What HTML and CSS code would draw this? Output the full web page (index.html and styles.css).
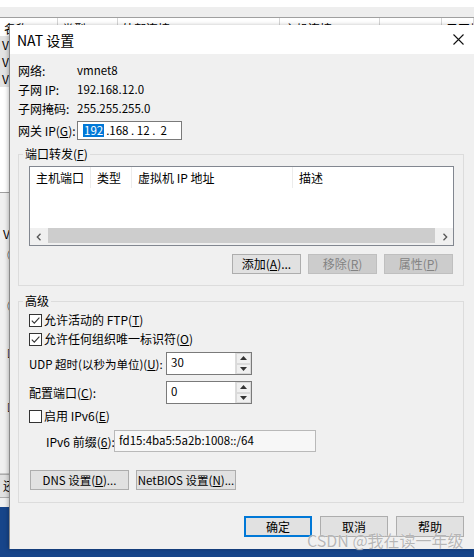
FILE: index.html
```html
<!DOCTYPE html>
<html lang="zh-CN">
<head>
<meta charset="utf-8">
<title>NAT 设置</title>
<link rel="stylesheet" href="styles.css">
</head>
<body>
<div class="desk">
  <div class="bgwin">
    <div class="bg-top"></div>
    <div class="bg-tool"></div>
    <div class="bg-thead">
      <span class="hc1">名称</span><span class="hc2">类型</span><span class="hc3">外部连接</span><span class="hc4">主机连接</span><span class="hc5">DHCP</span><span class="hc6">子网地址</span>
    </div>
    <div class="bg-rows">
      <div class="bg-row">VMnet0</div>
      <div class="bg-row">VMnet1</div>
      <div class="bg-row">VMnet8</div>
    </div>
    <div class="bg-white"></div>
    <div class="bg-info">
      <div class="bg-label">VMnet 信息</div>
      <div class="bg-radio first">○ 桥接模式</div>
      <div class="bg-radio second">○ NAT 模式</div>
      <div class="bg-chk first">☐ 将主机虚拟适配器连接到此网络</div>
      <div class="bg-chk second">☐ 使用本地 DHCP 服务</div>
    </div>
    <div class="bg-foot"><span class="bg-btn">还原默认设置</span></div>
  </div>

  <div class="dialog">
    <div class="titlebar">
      <span class="title">NAT 设置</span>
      <svg class="close" width="11" height="11" viewBox="0 0 11 11"><path d="M0.5 0.5 L10.5 10.5 M10.5 0.5 L0.5 10.5" stroke="#111" stroke-width="1.1" fill="none"/></svg>
    </div>
    <div class="body">
      <div class="info-row"><span class="lbl">网络:</span><span class="val">vmnet8</span></div>
      <div class="info-row"><span class="lbl">子网 IP:</span><span class="val">192.168.12.0</span></div>
      <div class="info-row"><span class="lbl">子网掩码:</span><span class="val">255.255.255.0</span></div>
      <div class="info-row gw"><span class="lbl">网关 IP(<u>G</u>):</span>
        <div class="ipbox"><span class="sel">192</span><span class="ipseg">.168 . 12 .  2</span></div>
      </div>

      <fieldset class="group pf">
        <legend>端口转发(<u>F</u>)</legend>
        <div class="inner">
          <div class="listview">
            <div class="lv-head">
              <span class="col c1">主机端口</span><span class="col c2">类型</span><span class="col c3">虚拟机 IP 地址</span><span class="col c4">描述</span>
            </div>
            <div class="lv-body"></div>
            <div class="hscroll">
              <span class="arrow"><svg width="6" height="8" viewBox="0 0 6 8"><path d="M4.5 0.8 L1.3 4 L4.5 7.2" stroke="#555" stroke-width="1.3" fill="none"/></svg></span>
              <span class="track"><span class="thumb"></span></span>
              <span class="arrow"><svg width="6" height="8" viewBox="0 0 6 8"><path d="M1.5 0.8 L4.7 4 L1.5 7.2" stroke="#555" stroke-width="1.3" fill="none"/></svg></span>
            </div>
          </div>
          <div class="btn-row">
            <button class="btn">添加(<u>A</u>)...</button>
            <button class="btn dis">移除(<u>R</u>)</button>
            <button class="btn dis">属性(<u>P</u>)</button>
          </div>
        </div>
      </fieldset>

      <fieldset class="group adv">
        <legend>高级</legend>
        <div class="inner">
          <div class="chk-row">
            <span class="box"><svg width="11" height="11" viewBox="0 0 11 11"><path d="M1.8 5.6 L4.3 8.2 L9.4 2.6" stroke="#333" stroke-width="1.1" fill="none"/></svg></span>
            <span>允许活动的 FTP(<u>T</u>)</span>
          </div>
          <div class="chk-row r2">
            <span class="box"><svg width="11" height="11" viewBox="0 0 11 11"><path d="M1.8 5.6 L4.3 8.2 L9.4 2.6" stroke="#333" stroke-width="1.1" fill="none"/></svg></span>
            <span>允许任何组织唯一标识符(<u>O</u>)</span>
          </div>
          <div class="spin-row udp">
            <span class="slbl">UDP 超时(以秒为单位)(<u>U</u>):</span>
            <div class="spin">
              <span class="spin-val">30</span>
              <span class="spin-btns">
                <span class="sb"><svg width="7" height="4" viewBox="0 0 7 4"><path d="M0 4 L3.5 0 L7 4 Z" fill="#333"/></svg></span>
                <span class="sb"><svg width="7" height="4" viewBox="0 0 7 4"><path d="M0 0 L3.5 4 L7 0 Z" fill="#333"/></svg></span>
              </span>
            </div>
          </div>
          <div class="spin-row cfg">
            <span class="slbl">配置端口(<u>C</u>):</span>
            <div class="spin">
              <span class="spin-val">0</span>
              <span class="spin-btns">
                <span class="sb"><svg width="7" height="4" viewBox="0 0 7 4"><path d="M0 4 L3.5 0 L7 4 Z" fill="#333"/></svg></span>
                <span class="sb"><svg width="7" height="4" viewBox="0 0 7 4"><path d="M0 0 L3.5 4 L7 0 Z" fill="#333"/></svg></span>
              </span>
            </div>
          </div>
          <div class="chk-row r3">
            <span class="box"></span>
            <span>启用 IPv6(<u>E</u>)</span>
          </div>
          <div class="pre-row">
            <span class="plbl">IPv6 前缀(<u>6</u>):</span>
            <span class="prebox">fd15:4ba5:5a2b:1008::/64</span>
          </div>
          <div class="btn-row2">
            <button class="btn dns">DNS 设置(<u>D</u>)...</button>
            <button class="btn nb">NetBIOS 设置(<u>N</u>)...</button>
          </div>
        </div>
      </fieldset>

      <div class="footer">
        <button class="btn fbtn def">确定</button>
        <button class="btn fbtn">取消</button>
        <button class="btn fbtn">帮助</button>
      </div>
    </div>
  </div>

  <div class="watermark">CSDN @我在读一年级</div>
</div>
</body>
</html>
```

FILE: styles.css
```css
* { box-sizing: border-box; }
html, body { margin: 0; padding: 0; }
body {
  width: 474px;
  height: 557px;
  overflow: hidden;
  background: #17458a;
  font-family: "Noto Sans CJK SC", "Noto Sans", sans-serif;
  font-size: 12px;
  color: #000;
}
u { text-decoration: underline; text-underline-offset: 1px; }

.desk { position: relative; width: 474px; height: 557px; }

/* background window */
.bgwin { height: 507px; background: #f0f0f0; display: flex; flex-direction: column; overflow: hidden; }
.bg-top { height: 7px; background: #fff; }
.bg-tool { height: 11px; background: #eeeeee; border-bottom: 1px solid #a0a0a0; }
.bg-thead { height: 18px; display: flex; background: #fff; line-height: 22px; white-space: nowrap; overflow: hidden; }
.bg-thead span { padding-left: 4px; border-right: 1px solid #d6d6d6; overflow: hidden; }
.hc1 { width: 58px; } .hc2 { width: 60px; } .hc3 { width: 162px; } .hc4 { width: 100px; } .hc5 { width: 62px; } .hc6 { flex: 1; }
.bg-rows { background: #e3e3e3; }
.bg-row { height: 17px; line-height: 17px; padding-left: 2px; }
.bg-white { height: 106px; background: #fff; border-bottom: 1px solid #a0a0a0; }
.bg-info { flex: 1; padding-left: 3px; }
.bg-label { margin-top: 33px; line-height: 16px; }
.bg-radio { line-height: 14px; padding-left: 4px; }
.bg-radio.first { margin-top: 6px; }
.bg-radio.second { margin-top: 37px; }
.bg-chk { line-height: 14px; padding-left: 4px; }
.bg-chk.first { margin-top: 33px; }
.bg-chk.second { margin-top: 40px; }
.bg-foot { height: 34px; border-top: 1px solid #c8c8c8; }
.bg-btn { display: block; width: 90px; height: 24px; line-height: 22px; margin-left: -2px; background: #e1e1e1; border: 1px solid #adadad; padding-left: 4px; }

/* dialog */
.dialog {
  position: absolute;
  left: 9px;
  top: 25px;
  width: 465px;
  height: 524px;
  background: #f0f0f0;
  border-left: 1px solid #8a8a8a;
  box-shadow: -1px 0 4px rgba(0, 0, 0, 0.25);
  display: flex;
  flex-direction: column;
}
.titlebar {
  height: 29px;
  background: #fff;
  display: flex;
  align-items: center;
  justify-content: space-between;
  padding: 0 10px 0 7px;
}
.title { font-size: 14px; line-height: 20px; }
.close { display: block; }

.body { padding: 7px 10px 0 8px; display: flex; flex-direction: column; }

.info-row { display: flex; align-items: center; height: 19px; line-height: 19px; }
.lbl { width: 59px; white-space: nowrap; }
.val { font-size: 11.5px; }
.info-row.gw { margin-top: 3px; }
.ipbox {
  width: 105px;
  height: 19px;
  background: #fff;
  border: 1px solid #7a7a7a;
  padding-left: 5px;
  display: flex;
  align-items: center;
  font-size: 11.5px;
  line-height: 13px;
  white-space: pre;
}
.sel { background: #0078d7; color: #fff; padding: 0 1px; }
.ipseg { padding-left: 2px; }

/* group boxes */
.group {
  margin: 6px 0 0 0;
  padding: 0;
  border: 1px solid #dcdcdc;
  min-width: 0;
}
.group legend { margin-left: 4px; padding: 0 2px; line-height: 16px; }
.group.adv { margin-top: 7px; }

.pf .inner { padding: 4px 9px 11px 10px; }
.listview { height: 80px; background: #fff; border: 1px solid #828790; display: flex; flex-direction: column; }
.lv-head { height: 21px; display: flex; line-height: 21px; white-space: nowrap; }
.col { padding-left: 6px; border-right: 1px solid #ececec; }
.c1 { width: 61px; } .c2 { width: 41px; } .c3 { width: 161px; } .c4 { flex: 1; border-right: 0; }
.lv-body { flex: 1; }
.hscroll { height: 17px; display: flex; background: #f0f0f0; }
.arrow { width: 17px; display: flex; align-items: center; justify-content: center; }
.track { flex: 1; padding: 0 1px 2px 1px; display: flex; }
.thumb { flex: 1; background: #cdcdcd; }

.btn-row { display: flex; justify-content: flex-end; gap: 7px; margin-top: 8px; padding-right: 1px; }
.btn {
  font-family: inherit;
  font-size: 12px;
  color: #000;
  background: #e1e1e1;
  border: 1px solid #adadad;
  height: 20px;
  padding: 0;
  line-height: 18px;
  margin: 0;
  white-space: nowrap;
}
.btn-row .btn { width: 69px; }
.btn.dis { background: #cccccc; border-color: #bfbfbf; color: #838383; }

.adv .inner { padding: 3px 9px 12px 10px; }
.chk-row { display: flex; align-items: center; gap: 2px; height: 16px; line-height: 16px; }
.chk-row.r2 { margin-top: 3px; }
.chk-row.r3 { margin-top: 4px; }
.box { width: 13px; height: 13px; background: #fff; border: 1px solid #333; display: flex; align-items: center; justify-content: center; }

.spin-row { display: flex; align-items: center; height: 23px; }
.spin-row.udp { margin-top: 5px; }
.spin-row.cfg { margin-top: 6px; }
.slbl { width: 137px; white-space: nowrap; }
.udp .slbl { font-size: 11.5px; }
.spin { width: 86px; height: 23px; display: flex; background: #fff; border: 1px solid #7a7a7a; }
.spin-val { flex: 1; padding: 2px 0 0 4px; line-height: 14px; font-size: 11.5px; }
.spin-btns { width: 16px; display: flex; flex-direction: column; border-left: 1px solid #dcdcdc; }
.sb { flex: 1; display: flex; align-items: center; justify-content: center; background: #f0f0f0; border: 1px solid #dadada; }

.pre-row { display: flex; align-items: center; height: 22px; margin-top: 6px; }
.plbl { width: 85px; padding-left: 17px; white-space: nowrap; }
.prebox {
  width: 202px;
  height: 22px;
  border: 1px solid #b9b9b9;
  background: #f7f7f7;
  padding: 2px 0 0 4px;
  line-height: 14px;
  font-size: 11.5px;
}

.btn-row2 { display: flex; gap: 7px; margin-top: 18px; margin-left: 1px; }
.btn.dns { width: 99px; font-size: 11.5px; }
.btn.nb { width: 100px; font-size: 11.5px; }

.footer { display: flex; justify-content: flex-end; gap: 8px; margin-top: 13px; }
.btn.fbtn { width: 68px; height: 21px; line-height: 19px; }
.btn.def { border-color: #0078d7; box-shadow: inset 0 0 0 1px #0078d7; }

.watermark {
  position: absolute;
  left: 307px;
  top: 530px;
  font-size: 16px;
  line-height: 20px;
  color: rgba(160, 160, 160, 0.75);
  text-shadow: 0 0 1px rgba(255, 255, 255, 0.9);
  white-space: nowrap;
}
```
